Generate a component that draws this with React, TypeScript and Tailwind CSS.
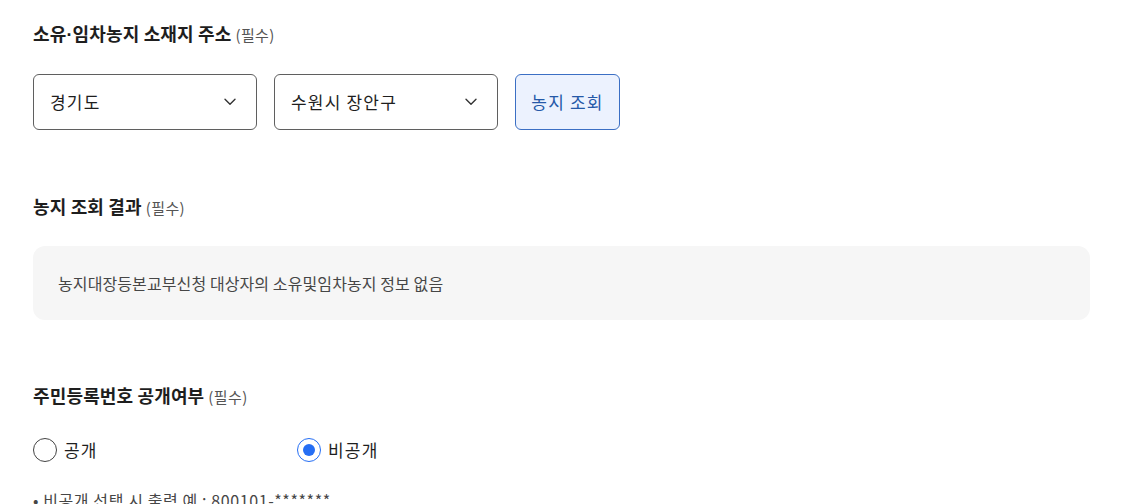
import React from "react";

const font = { fontFamily: '"Noto Sans CJK KR", "Noto Sans", sans-serif' };

function Chevron() {
  return (
    <svg width="12" height="8" viewBox="0 0 12 8" fill="none" className="shrink-0">
      <path d="M1 1.2 L6 6.2 L11 1.2" stroke="#333" strokeWidth="1.4" strokeLinecap="round" strokeLinejoin="round" />
    </svg>
  );
}

function Heading({ children }: { children: React.ReactNode }) {
  return (
    <div className="flex items-baseline h-6 leading-6">
      <span className="text-[18px] font-bold text-[#1e1e1e] tracking-[0.15px]">{children}</span>
      <span className="ml-[4px] text-[15px] tracking-[0.4px] text-[#555]">(필수)</span>
    </div>
  );
}

function Select({ value }: { value: string }) {
  return (
    <div className="w-[224px] h-[56px] border border-[#5f5f5f] rounded-[6px] flex items-center justify-between pl-[16px] pr-[20px] bg-white">
      <span className="text-[17px] tracking-[1.2px] text-[#1e1e1e]">{value}</span>
      <Chevron />
    </div>
  );
}

function Radio({ label, checked }: { label: string; checked?: boolean }) {
  return (
    <div className="flex items-center gap-[7px] w-[264px]">
      <span
        className={
          checked
            ? "w-[24px] h-[24px] rounded-full border-[1.5px] border-[#256ef4] flex items-center justify-center bg-white"
            : "w-[24px] h-[24px] rounded-full border-[1.5px] border-[#444] bg-white"
        }
      >
        {checked && <span className="w-[12px] h-[12px] rounded-full bg-[#256ef4]" />}
      </span>
      <span className="text-[17px] tracking-[1.2px] text-[#1e1e1e]">{label}</span>
    </div>
  );
}

export default function App() {
  return (
    <div style={font} className="w-[1123px] h-[504px] overflow-hidden bg-white pl-[33px] pr-[33px] pt-[21px]">
      <Heading>
        소유<span className="font-['Liberation_Sans']">·</span>임차농지 소재지 주소
      </Heading>
      <div className="mt-[29px] flex gap-[17px]">
        <Select value="경기도" />
        <Select value="수원시 장안구" />
        <button className="w-[105px] h-[56px] rounded-[6px] border border-[#3b6fc4] bg-[#ecf2fe] text-[17px] tracking-[1.2px] text-[#2559a8]">
          농지 조회
        </button>
      </div>

      <div className="mt-[64px]">
        <Heading>농지 조회 결과</Heading>
      </div>
      <div className="mt-[28px] w-[1057px] h-[74px] rounded-[12px] bg-[#f6f6f6] flex items-center pl-[25px]">
        <span className="text-[16px] tracking-[0.1px] text-[#464646]">농지대장등본교부신청 대상자의 소유및임차농지 정보 없음</span>
      </div>

      <div className="mt-[63px]">
        <Heading>주민등록번호 공개여부</Heading>
      </div>
      <div className="mt-[31px] flex h-[24px]">
        <Radio label="공개" />
        <Radio label="비공개" checked />
      </div>
      <div className="mt-[28px] text-[16px] tracking-[0.6px] leading-[20px] text-[#464646]">• 비공개 선택 시 출력 예 : 800101-*******</div>
    </div>
  );
}
